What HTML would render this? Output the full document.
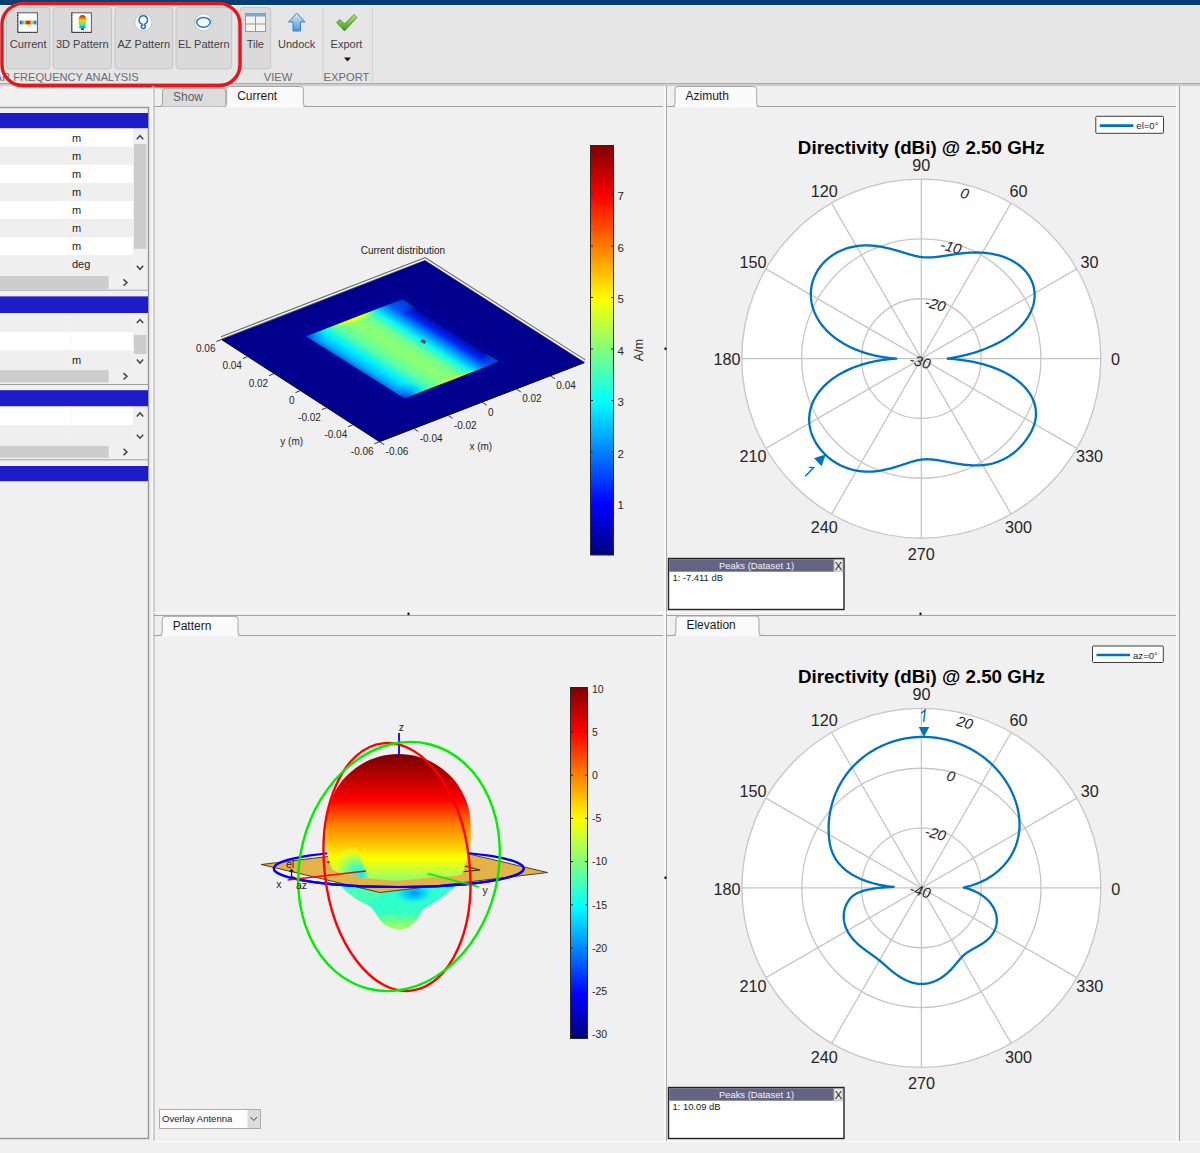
<!DOCTYPE html><html><head><meta charset="utf-8"><style>html,body{margin:0;padding:0;background:#f0f0f0;overflow:hidden}svg{display:block}text{font-family:"Liberation Sans", sans-serif}</style></head><body><svg width="1200" height="1153" viewBox="0 0 1200 1153"><defs><linearGradient id="jetv" x1="0" y1="1" x2="0" y2="0"><stop offset="0.0000" stop-color="#000080"/><stop offset="0.0312" stop-color="#00009f"/><stop offset="0.0625" stop-color="#0000bf"/><stop offset="0.0938" stop-color="#0000df"/><stop offset="0.1250" stop-color="#0000ff"/><stop offset="0.1562" stop-color="#0020ff"/><stop offset="0.1875" stop-color="#0040ff"/><stop offset="0.2188" stop-color="#0060ff"/><stop offset="0.2500" stop-color="#0080ff"/><stop offset="0.2812" stop-color="#009fff"/><stop offset="0.3125" stop-color="#00bfff"/><stop offset="0.3438" stop-color="#00dfff"/><stop offset="0.3750" stop-color="#00ffff"/><stop offset="0.4062" stop-color="#20ffdf"/><stop offset="0.4375" stop-color="#40ffbf"/><stop offset="0.4688" stop-color="#60ff9f"/><stop offset="0.5000" stop-color="#80ff80"/><stop offset="0.5312" stop-color="#9fff60"/><stop offset="0.5625" stop-color="#bfff40"/><stop offset="0.5938" stop-color="#dfff20"/><stop offset="0.6250" stop-color="#ffff00"/><stop offset="0.6562" stop-color="#ffdf00"/><stop offset="0.6875" stop-color="#ffbf00"/><stop offset="0.7188" stop-color="#ff9f00"/><stop offset="0.7500" stop-color="#ff8000"/><stop offset="0.7812" stop-color="#ff6000"/><stop offset="0.8125" stop-color="#ff4000"/><stop offset="0.8438" stop-color="#ff2000"/><stop offset="0.8750" stop-color="#ff0000"/><stop offset="0.9062" stop-color="#df0000"/><stop offset="0.9375" stop-color="#bf0000"/><stop offset="0.9688" stop-color="#9f0000"/><stop offset="1.0000" stop-color="#800000"/></linearGradient></defs><rect x="0" y="0" width="1200" height="1153" fill="#f0f0f0"/><rect x="0" y="0" width="1200" height="5" fill="#053e76"/><rect x="0" y="5" width="1200" height="1" fill="#fafafa"/><rect x="0" y="6" width="1200" height="77" fill="#e6e6e6"/><rect x="0" y="83" width="1200" height="1.6" fill="#acacac"/><rect x="0" y="84.6" width="1200" height="1.6" fill="#d0d0d0"/><rect x="6.5" y="7.5" width="43.3" height="61.3" rx="3" fill="#dadada" stroke="#c4c4c4" stroke-width="1"/><rect x="53.1" y="7.5" width="58.5" height="61.3" rx="3" fill="#dadada" stroke="#c4c4c4" stroke-width="1"/><rect x="115.0" y="7.5" width="57.7" height="61.3" rx="3" fill="#dadada" stroke="#c4c4c4" stroke-width="1"/><rect x="176.0" y="7.5" width="55.7" height="61.3" rx="3" fill="#dadada" stroke="#c4c4c4" stroke-width="1"/><rect x="240.0" y="7.5" width="30.7" height="61.3" rx="3" fill="#dadada" stroke="#c4c4c4" stroke-width="1"/><rect x="237.0" y="8" width="1" height="74" fill="#d2d2d2"/><rect x="322.5" y="8" width="1" height="74" fill="#d2d2d2"/><rect x="372.0" y="8" width="1" height="74" fill="#d2d2d2"/><text x="28.2" y="47.7" font-size="11.00" text-anchor="middle" fill="#404048" >Current</text><text x="82.3" y="47.7" font-size="11.00" text-anchor="middle" fill="#404048" >3D Pattern</text><text x="143.8" y="47.7" font-size="11.00" text-anchor="middle" fill="#404048" >AZ Pattern</text><text x="203.8" y="47.7" font-size="11.00" text-anchor="middle" fill="#404048" >EL Pattern</text><text x="255.3" y="47.7" font-size="11.00" text-anchor="middle" fill="#404048" >Tile</text><text x="296.7" y="47.7" font-size="11.00" text-anchor="middle" fill="#404048" >Undock</text><text x="346.5" y="47.7" font-size="11.00" text-anchor="middle" fill="#404048" >Export</text><text x="-5.2" y="81.1" font-size="11.10" text-anchor="start" fill="#6a6a72" >AR FREQUENCY ANALYSIS</text><text x="278.0" y="81.3" font-size="11.20" text-anchor="middle" fill="#6a6a72" >VIEW</text><text x="346.5" y="81.3" font-size="11.20" text-anchor="middle" fill="#6a6a72" >EXPORT</text><path d="M344 57.5 L351 57.5 L347.5 61.5 Z" fill="#111"/><rect x="17.8" y="12.8" width="19.6" height="19.6" fill="#fff" stroke="#5a5a5a" stroke-width="1"/><path d="M17.8 12.8 V32.4 H37.4" fill="none" stroke="#222" stroke-width="1.1" stroke-dasharray="1 1.2"/><defs><linearGradient id="curg" x1="0" x2="1"><stop offset="0" stop-color="#0040ff"/><stop offset=".14" stop-color="#00c0ff"/><stop offset=".3" stop-color="#ffd000"/><stop offset=".45" stop-color="#ff0000"/><stop offset=".58" stop-color="#ff2000"/><stop offset=".72" stop-color="#ffe000"/><stop offset=".86" stop-color="#00d0ff"/><stop offset="1" stop-color="#0040ff"/></linearGradient></defs><rect x="19.8" y="20.6" width="16.5" height="3.8" fill="url(#curg)"/><rect x="71.8" y="12.8" width="19.6" height="19.6" fill="#fff" stroke="#5a5a5a" stroke-width="1"/><path d="M71.8 12.8 V32.4 H91.4" fill="none" stroke="#222" stroke-width="1.1" stroke-dasharray="1 1.2"/><defs><linearGradient id="p3g" x1="0" y1="0" x2="0" y2="1"><stop offset="0" stop-color="#e00000"/><stop offset=".35" stop-color="#ffd000"/><stop offset=".6" stop-color="#40ff80"/><stop offset=".85" stop-color="#00a0ff"/><stop offset="1" stop-color="#0030ff"/></linearGradient></defs><path d="M82.5 15 C79.5 15 78.5 18 78.5 21 C78.5 24 79.5 26 80 26.5 L78.5 27 L79.5 28 L81 28 L81 30 L84 30 L84 28 L85.5 28 L86.5 27 L85 26.5 C85.5 26 86.5 24 86.5 21 C86.5 18 85.5 15 82.5 15 Z" fill="url(#p3g)"/><circle cx="143.3" cy="22.4" r="8.6" fill="#fbfbfb" stroke="#bdbdbd" stroke-width=".9"/><path d="M142.2 24.3 C139.6 23.3 138.9 21.3 139.1 19.6 C139.4 17.3 141.2 15.8 143.3 15.8 C145.4 15.8 147.2 17.3 147.5 19.6 C147.7 21.3 147 23.3 144.4 24.3 L144.4 25.2 C145.4 25.6 145.6 26.4 145.4 27.2 C145.1 28.3 144.2 28.7 143.3 28.7 C142.4 28.7 141.5 28.3 141.2 27.2 C141 26.4 141.2 25.6 142.2 25.2 Z" fill="none" stroke="#1e74c4" stroke-width="1.5"/><circle cx="203.3" cy="22.3" r="8.6" fill="#fbfbfb" stroke="#bdbdbd" stroke-width=".9"/><ellipse cx="203.5" cy="22.3" rx="6.8" ry="4.9" fill="none" stroke="#1e74c4" stroke-width="1.5"/><rect x="245.5" y="13.5" width="20" height="18" fill="#f4f4f4" stroke="#9a9a9a" stroke-width="1"/><rect x="245.5" y="13.5" width="20" height="3" fill="#7ea6d0"/><path d="M255.5 16.5 V31.5 M245.5 24 H265.5" stroke="#9a9a9a" stroke-width="1"/><defs><linearGradient id="upg" x1="0" y1="0" x2="0" y2="1"><stop offset="0" stop-color="#d8ecfb"/><stop offset="1" stop-color="#4f95d6"/></linearGradient></defs><path d="M296.7 13 L305 22 L300.5 22 L300.5 31 L293 31 L293 22 L288.5 22 Z" fill="url(#upg)" stroke="#3f7fbf" stroke-width="1"/><defs><linearGradient id="ckg" x1="0" y1="0" x2="0" y2="1"><stop offset="0" stop-color="#b8e070"/><stop offset="1" stop-color="#3a9a20"/></linearGradient></defs><path d="M336.5 22.5 L340 19.5 L344.5 24 L354 14.5 L357 17.5 L344.5 31 Z" fill="url(#ckg)" stroke="#3c8a2a" stroke-width=".8"/><rect x="2" y="3.5" width="238" height="82.2" rx="21" fill="none" stroke="#e3161e" stroke-width="3.4"/><rect x="-1" y="107.5" width="149.5" height="1031" fill="#f0f0f0" stroke="#969696" stroke-width="1.4"/><rect x="0" y="113.0" width="148" height="15.3" fill="#1c1cc8"/><rect x="0" y="128.6" width="133" height="18.1" fill="#ffffff"/><text x="72" y="141.7" font-size="11" fill="#222">m</text><rect x="0" y="146.7" width="133" height="18.1" fill="#efefef"/><text x="72" y="159.8" font-size="11" fill="#222">m</text><rect x="0" y="164.8" width="133" height="18.1" fill="#ffffff"/><text x="72" y="177.9" font-size="11" fill="#222">m</text><rect x="0" y="182.9" width="133" height="18.1" fill="#efefef"/><text x="72" y="196.0" font-size="11" fill="#222">m</text><rect x="0" y="201.0" width="133" height="18.1" fill="#ffffff"/><text x="72" y="214.1" font-size="11" fill="#222">m</text><rect x="0" y="219.1" width="133" height="18.1" fill="#efefef"/><text x="72" y="232.2" font-size="11" fill="#222">m</text><rect x="0" y="237.2" width="133" height="18.1" fill="#ffffff"/><text x="72" y="250.2" font-size="11" fill="#222">m</text><rect x="0" y="255.3" width="133" height="18.1" fill="#efefef"/><text x="72" y="268.4" font-size="11" fill="#222">deg</text><rect x="70.5" y="128.6" width="1" height="144.8" fill="#f2f2f2" opacity=".6"/><rect x="133" y="128.6" width="14" height="144.8" fill="#f0f0f0"/><rect x="134" y="143.9" width="12.5" height="104.9" fill="#cdcdcd"/><path d="M136.8 139.2 L140 135.7 L143.2 139.2" fill="none" stroke="#444" stroke-width="1.5"/><path d="M136.8 265.8 L140 269.3 L143.2 265.8" fill="none" stroke="#444" stroke-width="1.5"/><rect x="0" y="275.5" width="147" height="14.3" fill="#f0f0f0"/><rect x="0" y="276.0" width="108.7" height="13.3" fill="#cdcdcd"/><path d="M123.5 279.4 L127 282.6 L123.5 285.8" fill="none" stroke="#444" stroke-width="1.5"/><rect x="0" y="289.8" width="148" height="1" fill="#a0a0a0"/><rect x="0" y="290.8" width="148" height="6" fill="#f0f0f0"/><rect x="0" y="296.4" width="148" height="16.6" fill="#1c1cc8"/><rect x="0" y="314.0" width="133" height="18.2" fill="#efefef"/><rect x="0" y="332.2" width="133" height="18.2" fill="#ffffff"/><rect x="0" y="350.4" width="133" height="18.2" fill="#efefef"/><text x="72" y="363.5" font-size="11" fill="#222">m</text><rect x="70.5" y="314.0" width="1" height="54.6" fill="#f2f2f2" opacity=".6"/><rect x="133" y="314.0" width="14" height="54.6" fill="#f0f0f0"/><rect x="134" y="335.0" width="12.5" height="19.0" fill="#cdcdcd"/><path d="M136.8 323.0 L140 319.5 L143.2 323.0" fill="none" stroke="#444" stroke-width="1.5"/><path d="M136.8 359.6 L140 363.1 L143.2 359.6" fill="none" stroke="#444" stroke-width="1.5"/><rect x="0" y="369.6" width="147" height="13.4" fill="#f0f0f0"/><rect x="0" y="370.1" width="108.7" height="12.4" fill="#cdcdcd"/><path d="M123.5 373.1 L127 376.3 L123.5 379.5" fill="none" stroke="#444" stroke-width="1.5"/><rect x="0" y="384.0" width="148" height="1" fill="#a0a0a0"/><rect x="0" y="390.2" width="148" height="16.3" fill="#1c1cc8"/><rect x="0" y="406.5" width="133" height="18.5" fill="#ffffff"/><rect x="0" y="425.0" width="133" height="18.5" fill="#efefef"/><rect x="70.5" y="406.5" width="1" height="37.0" fill="#f2f2f2" opacity=".6"/><rect x="133" y="406.5" width="14" height="37.0" fill="#f0f0f0"/><path d="M136.8 416.4 L140 412.9 L143.2 416.4" fill="none" stroke="#444" stroke-width="1.5"/><path d="M136.8 434.7 L140 438.2 L143.2 434.7" fill="none" stroke="#444" stroke-width="1.5"/><rect x="0" y="445.5" width="147" height="12.8" fill="#f0f0f0"/><rect x="0" y="446.0" width="108.7" height="11.8" fill="#cdcdcd"/><path d="M123.5 448.7 L127 451.9 L123.5 455.1" fill="none" stroke="#444" stroke-width="1.5"/><rect x="0" y="459.3" width="148" height="1" fill="#a0a0a0"/><rect x="0" y="466" width="148" height="15.2" fill="#1c1cc8"/><rect x="152.5" y="86" width="1" height="1055" fill="#ffffff"/><rect x="153.5" y="86" width="1" height="1055" fill="#a8a8a8"/><rect x="664.5" y="86" width="1" height="1055" fill="#ffffff"/><rect x="666" y="86" width="1" height="1055" fill="#a8a8a8"/><rect x="1176" y="86" width="1" height="1055" fill="#fbfbfb"/><rect x="1179" y="86" width="1" height="1055" fill="#a4a4a4"/><rect x="153" y="1141" width="1047" height="1" fill="#fdfdfd"/><rect x="153" y="612" width="1024" height="1" fill="#fdfdfd"/><rect x="154.0" y="106.0" width="509.0" height="1" fill="#a0a0a0"/><path d="M159.5 106.5 Q162.5 106.5 162.5 103.0 L162.5 91.3 Q162.5 88.3 165.5 88.3 L222.8 88.3 Q225.8 88.3 225.8 91.3 L225.8 103.0 Q225.8 106.5 228.8 106.5" fill="#dcdcdc" stroke="#a4a4a4" stroke-width="1"/><text x="173.0" y="100.8" font-size="12" fill="#606060">Show</text><path d="M223.7 106.5 Q226.7 106.5 226.7 103.0 L226.7 89.5 Q226.7 86.5 229.7 86.5 L300.3 86.5 Q303.3 86.5 303.3 89.5 L303.3 103.0 Q303.3 106.5 306.3 106.5" fill="#fafafa" stroke="#a4a4a4" stroke-width="1"/><rect x="227.2" y="105.5" width="75.6" height="2" fill="#fafafa"/><text x="237.2" y="99.8" font-size="12" fill="#1a1a1a">Current</text><rect x="667.0" y="106.0" width="509.0" height="1" fill="#a0a0a0"/><path d="M672.0 106.5 Q675.0 106.5 675.0 103.0 L675.0 89.5 Q675.0 86.5 678.0 86.5 L753.7 86.5 Q756.7 86.5 756.7 89.5 L756.7 103.0 Q756.7 106.5 759.7 106.5" fill="#fafafa" stroke="#a4a4a4" stroke-width="1"/><rect x="675.5" y="105.5" width="80.7" height="2" fill="#fafafa"/><text x="685.5" y="99.8" font-size="12" fill="#1a1a1a">Azimuth</text><rect x="154.0" y="615.0" width="509.0" height="1" fill="#a0a0a0"/><rect x="154.0" y="635.0" width="509.0" height="1" fill="#a0a0a0"/><path d="M159.2 635.5 Q162.2 635.5 162.2 632.0 L162.2 619.3 Q162.2 616.3 165.2 616.3 L235.0 616.3 Q238.0 616.3 238.0 619.3 L238.0 632.0 Q238.0 635.5 241.0 635.5" fill="#fafafa" stroke="#a4a4a4" stroke-width="1"/><rect x="162.7" y="634.5" width="74.8" height="2" fill="#fafafa"/><text x="172.7" y="629.6" font-size="12" fill="#1a1a1a">Pattern</text><rect x="667.0" y="615.0" width="509.0" height="1" fill="#a0a0a0"/><rect x="667.0" y="635.0" width="509.0" height="1" fill="#a0a0a0"/><path d="M672.9 635.5 Q675.9 635.5 675.9 632.0 L675.9 619.0 Q675.9 616.0 678.9 616.0 L756.0 616.0 Q759.0 616.0 759.0 619.0 L759.0 632.0 Q759.0 635.5 762.0 635.5" fill="#fafafa" stroke="#a4a4a4" stroke-width="1"/><rect x="676.4" y="634.5" width="82.1" height="2" fill="#fafafa"/><text x="686.4" y="629.3" font-size="12" fill="#1a1a1a">Elevation</text><circle cx="921.30" cy="358.60" r="179.50" fill="#ffffff" stroke="#c6c6c6" stroke-width="1.3"/><circle cx="921.30" cy="358.60" r="59.83" fill="none" stroke="#c6c6c6" stroke-width="1.3"/><circle cx="921.30" cy="358.60" r="119.67" fill="none" stroke="#c6c6c6" stroke-width="1.3"/><line x1="741.80" y1="358.60" x2="1100.80" y2="358.60" stroke="#c6c6c6" stroke-width="1.3"/><line x1="765.85" y1="448.35" x2="1076.75" y2="268.85" stroke="#c6c6c6" stroke-width="1.3"/><line x1="831.55" y1="514.05" x2="1011.05" y2="203.15" stroke="#c6c6c6" stroke-width="1.3"/><line x1="921.30" y1="538.10" x2="921.30" y2="179.10" stroke="#c6c6c6" stroke-width="1.3"/><line x1="1011.05" y1="514.05" x2="831.55" y2="203.15" stroke="#c6c6c6" stroke-width="1.3"/><line x1="1076.75" y1="448.35" x2="765.85" y2="268.85" stroke="#c6c6c6" stroke-width="1.3"/><text x="1115.60" y="365.20" font-size="16.2" text-anchor="middle" fill="#262626">0</text><text x="1089.57" y="268.05" font-size="16.2" text-anchor="middle" fill="#262626">30</text><text x="1018.45" y="196.93" font-size="16.2" text-anchor="middle" fill="#262626">60</text><text x="921.30" y="170.90" font-size="16.2" text-anchor="middle" fill="#262626">90</text><text x="824.15" y="196.93" font-size="16.2" text-anchor="middle" fill="#262626">120</text><text x="753.03" y="268.05" font-size="16.2" text-anchor="middle" fill="#262626">150</text><text x="727.00" y="365.20" font-size="16.2" text-anchor="middle" fill="#262626">180</text><text x="753.03" y="462.35" font-size="16.2" text-anchor="middle" fill="#262626">210</text><text x="824.15" y="533.47" font-size="16.2" text-anchor="middle" fill="#262626">240</text><text x="921.30" y="559.50" font-size="16.2" text-anchor="middle" fill="#262626">270</text><text x="1018.45" y="533.47" font-size="16.2" text-anchor="middle" fill="#262626">300</text><text x="1089.57" y="462.35" font-size="16.2" text-anchor="middle" fill="#262626">330</text><text x="964.70" y="198.40" font-size="14.5" font-style="italic" text-anchor="middle" fill="#262626" transform="rotate(15 964.70 193.40)">0</text><text x="950.90" y="251.90" font-size="14.5" font-style="italic" text-anchor="middle" fill="#262626" transform="rotate(15 950.90 246.90)">-10</text><text x="935.30" y="309.30" font-size="14.5" font-style="italic" text-anchor="middle" fill="#262626" transform="rotate(15 935.30 304.30)">-20</text><text x="920.10" y="366.70" font-size="14.5" font-style="italic" text-anchor="middle" fill="#262626" transform="rotate(15 920.10 361.70)">-30</text><polyline points="946.80,358.60 948.56,358.36 950.40,358.09 952.32,357.79 954.31,357.45 956.37,357.07 958.49,356.65 960.66,356.19 962.89,355.69 965.15,355.15 967.45,354.56 969.78,353.93 972.13,353.26 974.50,352.54 976.88,351.78 979.27,350.97 981.66,350.12 984.04,349.22 986.41,348.29 988.76,347.31 991.08,346.30 993.38,345.24 995.64,344.15 997.86,343.02 1000.02,341.87 1002.14,340.68 1004.20,339.46 1006.19,338.22 1008.11,336.95 1009.96,335.67 1011.73,334.37 1013.43,333.05 1015.05,331.72 1016.60,330.37 1018.08,329.01 1019.49,327.64 1020.82,326.26 1022.09,324.88 1023.29,323.48 1024.43,322.08 1025.49,320.68 1026.50,319.27 1027.44,317.86 1028.31,316.45 1029.13,315.03 1029.89,313.62 1030.58,312.21 1031.22,310.81 1031.80,309.40 1032.32,308.00 1032.79,306.61 1033.20,305.23 1033.56,303.85 1033.86,302.48 1034.11,301.12 1034.31,299.77 1034.46,298.43 1034.56,297.10 1034.62,295.79 1034.62,294.49 1034.58,293.20 1034.49,291.93 1034.36,290.67 1034.18,289.43 1033.96,288.20 1033.70,286.99 1033.40,285.80 1033.06,284.63 1032.68,283.47 1032.26,282.34 1031.81,281.22 1031.32,280.13 1030.79,279.05 1030.23,277.99 1029.64,276.96 1029.02,275.95 1028.36,274.95 1027.68,273.98 1026.97,273.03 1026.23,272.10 1025.46,271.20 1024.67,270.31 1023.85,269.45 1023.01,268.61 1022.15,267.80 1021.26,267.01 1020.35,266.23 1019.42,265.48 1018.48,264.76 1017.51,264.05 1016.53,263.37 1015.53,262.71 1014.51,262.08 1013.48,261.46 1012.44,260.87 1011.38,260.30 1010.31,259.75 1009.22,259.22 1008.13,258.71 1007.02,258.23 1005.91,257.77 1004.78,257.33 1003.65,256.91 1002.51,256.51 1001.36,256.13 1000.20,255.77 999.04,255.43 997.87,255.12 996.70,254.82 995.52,254.54 994.34,254.28 993.16,254.04 991.97,253.82 990.78,253.62 989.59,253.44 988.40,253.27 987.21,253.12 986.02,252.99 984.83,252.88 983.63,252.78 982.44,252.69 981.26,252.63 980.07,252.57 978.89,252.54 977.71,252.51 976.53,252.50 975.36,252.50 974.19,252.52 973.03,252.55 971.87,252.58 970.71,252.63 969.56,252.70 968.42,252.77 967.28,252.85 966.15,252.94 965.03,253.04 963.91,253.14 962.80,253.26 961.69,253.38 960.59,253.50 959.50,253.64 958.42,253.77 957.35,253.92 956.28,254.06 955.22,254.21 954.16,254.37 953.12,254.52 952.08,254.68 951.05,254.84 950.03,255.00 949.02,255.16 948.01,255.31 947.01,255.47 946.02,255.63 945.04,255.78 944.06,255.93 943.09,256.08 942.13,256.22 941.17,256.36 940.23,256.49 939.28,256.61 938.35,256.73 937.42,256.85 936.49,256.95 935.57,257.05 934.66,257.13 933.75,257.21 932.84,257.28 931.94,257.34 931.05,257.39 930.15,257.42 929.26,257.45 928.37,257.46 927.49,257.45 926.60,257.44 925.72,257.41 924.84,257.36 923.95,257.30 923.07,257.23 922.19,257.14 921.30,257.03 920.41,256.91 919.52,256.77 918.63,256.61 917.73,256.44 916.83,256.25 915.93,256.06 915.02,255.85 914.10,255.62 913.18,255.39 912.25,255.14 911.31,254.89 910.37,254.62 909.42,254.35 908.47,254.07 907.50,253.79 906.53,253.49 905.55,253.20 904.56,252.89 903.56,252.59 902.55,252.28 901.54,251.97 900.51,251.66 899.48,251.34 898.44,251.03 897.38,250.72 896.32,250.41 895.25,250.10 894.17,249.80 893.09,249.50 891.99,249.21 890.88,248.92 889.77,248.63 888.65,248.36 887.51,248.09 886.37,247.83 885.23,247.58 884.07,247.34 882.91,247.11 881.74,246.90 880.57,246.69 879.39,246.50 878.20,246.32 877.01,246.16 875.81,246.01 874.61,245.87 873.40,245.75 872.19,245.65 870.98,245.57 869.76,245.51 868.54,245.46 867.32,245.43 866.10,245.42 864.88,245.44 863.66,245.47 862.44,245.53 861.22,245.61 860.00,245.71 858.79,245.83 857.58,245.97 856.37,246.14 855.17,246.33 853.97,246.55 852.78,246.79 851.59,247.05 850.41,247.33 849.24,247.64 848.08,247.97 846.92,248.32 845.77,248.70 844.63,249.10 843.50,249.52 842.38,249.97 841.26,250.44 840.16,250.93 839.08,251.44 838.00,251.98 836.94,252.54 835.89,253.12 834.85,253.73 833.83,254.36 832.82,255.00 831.83,255.68 830.85,256.37 829.89,257.08 828.95,257.82 828.03,258.58 827.12,259.35 826.23,260.15 825.36,260.97 824.51,261.81 823.68,262.67 822.87,263.55 822.08,264.45 821.32,265.37 820.57,266.30 819.85,267.26 819.16,268.23 818.48,269.22 817.83,270.23 817.21,271.26 816.61,272.30 816.04,273.36 815.49,274.44 814.97,275.53 814.48,276.63 814.02,277.76 813.58,278.89 813.17,280.04 812.80,281.21 812.45,282.39 812.14,283.58 811.86,284.78 811.61,286.00 811.39,287.23 811.21,288.46 811.06,289.72 810.95,290.98 810.87,292.25 810.83,293.53 810.83,294.82 810.86,296.12 810.93,297.42 811.05,298.74 811.20,300.06 811.39,301.38 811.62,302.71 811.89,304.05 812.20,305.39 812.56,306.73 812.96,308.08 813.40,309.43 813.89,310.78 814.42,312.13 814.99,313.48 815.62,314.82 816.28,316.17 817.00,317.51 817.76,318.85 818.56,320.19 819.42,321.52 820.32,322.84 821.28,324.16 822.28,325.47 823.33,326.77 824.43,328.06 825.58,329.34 826.78,330.60 828.04,331.86 829.34,333.10 830.70,334.32 832.11,335.53 833.57,336.73 835.08,337.90 836.64,339.06 838.26,340.19 839.93,341.31 841.66,342.40 843.44,343.47 845.27,344.51 847.16,345.53 849.10,346.52 851.09,347.48 853.14,348.41 855.25,349.32 857.41,350.19 859.62,351.03 861.89,351.83 864.21,352.60 866.58,353.33 869.02,354.03 871.50,354.68 874.04,355.30 876.64,355.87 879.28,356.40 881.99,356.88 884.74,357.32 887.55,357.72 890.42,358.06 893.33,358.36 896.30,358.60 892.97,358.85 889.71,359.15 886.51,359.51 883.39,359.92 880.34,360.39 877.36,360.90 874.45,361.47 871.60,362.08 868.83,362.73 866.13,363.43 863.50,364.17 860.93,364.95 858.44,365.76 856.01,366.62 853.65,367.51 851.36,368.43 849.14,369.39 846.98,370.37 844.89,371.39 842.87,372.43 840.91,373.50 839.02,374.59 837.19,375.71 835.43,376.85 833.73,378.01 832.10,379.19 830.53,380.39 829.02,381.61 827.57,382.84 826.19,384.09 824.86,385.35 823.59,386.62 822.39,387.90 821.24,389.19 820.15,390.49 819.11,391.80 818.13,393.12 817.21,394.44 816.35,395.77 815.53,397.10 814.77,398.43 814.06,399.76 813.41,401.10 812.80,402.44 812.25,403.77 811.74,405.10 811.28,406.44 810.87,407.76 810.51,409.09 810.19,410.41 809.92,411.72 809.69,413.03 809.51,414.34 809.37,415.63 809.27,416.92 809.20,418.20 809.18,419.47 809.20,420.74 809.26,421.99 809.35,423.23 809.48,424.47 809.65,425.69 809.85,426.90 810.08,428.10 810.34,429.29 810.64,430.46 810.97,431.63 811.33,432.78 811.72,433.92 812.13,435.04 812.57,436.15 813.04,437.25 813.54,438.34 814.06,439.41 814.60,440.47 815.17,441.52 815.76,442.55 816.37,443.57 817.01,444.57 817.66,445.56 818.33,446.54 819.03,447.50 819.74,448.45 820.48,449.38 821.23,450.30 822.00,451.20 822.79,452.08 823.60,452.95 824.43,453.80 825.27,454.63 826.13,455.45 827.01,456.24 827.90,457.02 828.81,457.79 829.73,458.53 830.67,459.25 831.62,459.96 832.59,460.65 833.57,461.32 834.57,461.96 835.58,462.59 836.60,463.20 837.63,463.79 838.67,464.36 839.73,464.91 840.79,465.44 841.87,465.94 842.96,466.43 844.05,466.89 845.16,467.34 846.27,467.76 847.40,468.16 848.53,468.55 849.67,468.90 850.81,469.24 851.97,469.56 853.12,469.85 854.29,470.12 855.46,470.38 856.63,470.60 857.81,470.81 859.00,471.00 860.19,471.16 861.38,471.30 862.57,471.42 863.77,471.51 864.97,471.59 866.17,471.64 867.37,471.67 868.57,471.68 869.77,471.67 870.98,471.63 872.18,471.57 873.38,471.49 874.58,471.40 875.77,471.28 876.97,471.14 878.16,470.99 879.34,470.82 880.52,470.63 881.70,470.43 882.87,470.21 884.03,469.98 885.19,469.73 886.34,469.48 887.48,469.21 888.62,468.93 889.75,468.64 890.87,468.34 891.98,468.04 893.08,467.72 894.17,467.40 895.26,467.08 896.33,466.75 897.40,466.42 898.45,466.08 899.50,465.75 900.54,465.41 901.57,465.07 902.59,464.74 903.59,464.40 904.59,464.07 905.59,463.74 906.57,463.42 907.54,463.10 908.51,462.79 909.46,462.49 910.41,462.19 911.35,461.91 912.29,461.63 913.21,461.37 914.13,461.12 915.04,460.88 915.95,460.65 916.85,460.44 917.75,460.24 918.64,460.06 919.53,459.90 920.42,459.76 921.30,459.63 922.18,459.52 923.06,459.44 923.94,459.37 924.82,459.32 925.70,459.28 926.58,459.27 927.46,459.26 928.34,459.28 929.23,459.31 930.11,459.35 931.01,459.41 931.90,459.48 932.80,459.56 933.71,459.66 934.62,459.77 935.53,459.88 936.46,460.01 937.38,460.15 938.32,460.29 939.26,460.44 940.20,460.60 941.16,460.77 942.12,460.94 943.09,461.12 944.07,461.30 945.05,461.48 946.04,461.67 947.05,461.86 948.05,462.05 949.07,462.24 950.10,462.44 951.13,462.63 952.17,462.82 953.22,463.01 954.28,463.20 955.35,463.38 956.42,463.56 957.50,463.74 958.59,463.91 959.69,464.07 960.79,464.23 961.91,464.38 963.02,464.52 964.15,464.66 965.28,464.78 966.42,464.90 967.57,465.00 968.72,465.10 969.87,465.18 971.03,465.25 972.20,465.31 973.37,465.35 974.54,465.38 975.72,465.40 976.89,465.40 978.07,465.38 979.26,465.34 980.44,465.29 981.62,465.21 982.80,465.12 983.98,465.00 985.15,464.87 986.32,464.71 987.49,464.53 988.65,464.32 989.81,464.09 990.96,463.84 992.10,463.57 993.23,463.27 994.36,462.94 995.48,462.59 996.59,462.22 997.69,461.83 998.78,461.42 999.86,460.98 1000.93,460.52 1001.99,460.04 1003.04,459.54 1004.08,459.02 1005.11,458.48 1006.13,457.92 1007.13,457.34 1008.13,456.74 1009.11,456.12 1010.07,455.48 1011.03,454.82 1011.97,454.15 1012.90,453.46 1013.82,452.75 1014.72,452.02 1015.61,451.28 1016.49,450.52 1017.35,449.74 1018.19,448.95 1019.02,448.15 1019.84,447.33 1020.64,446.49 1021.43,445.64 1022.20,444.78 1022.96,443.90 1023.70,443.01 1024.43,442.11 1025.14,441.20 1025.83,440.27 1026.51,439.33 1027.17,438.38 1027.82,437.42 1028.45,436.45 1029.06,435.47 1029.66,434.47 1030.24,433.47 1030.80,432.46 1031.33,431.43 1031.85,430.39 1032.34,429.34 1032.80,428.27 1033.24,427.20 1033.65,426.11 1034.03,425.01 1034.39,423.89 1034.71,422.76 1034.99,421.62 1035.24,420.47 1035.46,419.30 1035.64,418.12 1035.78,416.93 1035.87,415.72 1035.93,414.51 1035.94,413.28 1035.91,412.04 1035.83,410.80 1035.71,409.54 1035.53,408.27 1035.31,406.99 1035.03,405.71 1034.70,404.42 1034.31,403.12 1033.87,401.81 1033.36,400.50 1032.80,399.18 1032.18,397.87 1031.50,396.54 1030.75,395.22 1029.94,393.90 1029.06,392.58 1028.11,391.26 1027.09,389.94 1026.01,388.62 1024.85,387.32 1023.61,386.02 1022.31,384.72 1020.92,383.44 1019.46,382.17 1017.92,380.91 1016.30,379.66 1014.60,378.43 1012.82,377.22 1010.96,376.03 1009.01,374.86 1006.97,373.71 1004.85,372.58 1002.64,371.48 1000.34,370.41 997.95,369.37 995.47,368.36 992.90,367.39 990.23,366.45 987.47,365.56 984.62,364.70 981.67,363.88 978.63,363.11 975.49,362.39 972.25,361.72 968.91,361.10 965.48,360.53 961.94,360.02 958.31,359.57 954.57,359.18 950.74,358.86 946.80,358.60" fill="none" stroke="#0072bd" stroke-width="2.3" stroke-linejoin="round"/><path d="M814.0 458.3 L825.6 454.6 L821.7 466.3 Z" fill="#0072bd"/><path d="M805.2 476.2 L813.6 467.6 L809.2 467.4" fill="none" stroke="#0072bd" stroke-width="1.4"/><text x="921.30" y="153.50" font-size="18.8" font-weight="bold" text-anchor="middle" fill="#000">Directivity (dBi) @ 2.50 GHz</text><rect x="1095.8" y="116.3" width="67.7" height="17.0" fill="#fff" stroke="#3c3c3c" stroke-width="1" rx="1"/><line x1="1099.8" y1="125.6" x2="1133.3" y2="125.6" stroke="#0072bd" stroke-width="2.6"/><text x="1136.3" y="129.1" font-size="9.6" fill="#262626">el=0&#176;</text><rect x="668.5" y="558.5" width="175.5" height="51" fill="#fff" stroke="#222" stroke-width="1.4"/><rect x="669.2" y="559.2" width="164.5" height="12.5" fill="#636384"/><text x="756.5" y="568.5" font-size="9.4" text-anchor="middle" fill="#f4f4f4">Peaks (Dataset 1)</text><rect x="834" y="559.7" width="9" height="11.5" fill="#e8e8e8" stroke="#888" stroke-width=".6"/><text x="838.5" y="569.5" font-size="11" text-anchor="middle" fill="#222" font-family="Liberation Serif">X</text><text x="672.5" y="581.0" font-size="9.4" fill="#1a1a1a">1: -7.411 dB</text><circle cx="921.40" cy="887.90" r="179.50" fill="#ffffff" stroke="#c6c6c6" stroke-width="1.3"/><circle cx="921.40" cy="887.90" r="59.83" fill="none" stroke="#c6c6c6" stroke-width="1.3"/><circle cx="921.40" cy="887.90" r="119.67" fill="none" stroke="#c6c6c6" stroke-width="1.3"/><line x1="741.90" y1="887.90" x2="1100.90" y2="887.90" stroke="#c6c6c6" stroke-width="1.3"/><line x1="765.95" y1="977.65" x2="1076.85" y2="798.15" stroke="#c6c6c6" stroke-width="1.3"/><line x1="831.65" y1="1043.35" x2="1011.15" y2="732.45" stroke="#c6c6c6" stroke-width="1.3"/><line x1="921.40" y1="1067.40" x2="921.40" y2="708.40" stroke="#c6c6c6" stroke-width="1.3"/><line x1="1011.15" y1="1043.35" x2="831.65" y2="732.45" stroke="#c6c6c6" stroke-width="1.3"/><line x1="1076.85" y1="977.65" x2="765.95" y2="798.15" stroke="#c6c6c6" stroke-width="1.3"/><text x="1115.70" y="894.50" font-size="16.2" text-anchor="middle" fill="#262626">0</text><text x="1089.67" y="797.35" font-size="16.2" text-anchor="middle" fill="#262626">30</text><text x="1018.55" y="726.23" font-size="16.2" text-anchor="middle" fill="#262626">60</text><text x="921.40" y="700.20" font-size="16.2" text-anchor="middle" fill="#262626">90</text><text x="824.25" y="726.23" font-size="16.2" text-anchor="middle" fill="#262626">120</text><text x="753.13" y="797.35" font-size="16.2" text-anchor="middle" fill="#262626">150</text><text x="727.10" y="894.50" font-size="16.2" text-anchor="middle" fill="#262626">180</text><text x="753.13" y="991.65" font-size="16.2" text-anchor="middle" fill="#262626">210</text><text x="824.25" y="1062.77" font-size="16.2" text-anchor="middle" fill="#262626">240</text><text x="921.40" y="1088.80" font-size="16.2" text-anchor="middle" fill="#262626">270</text><text x="1018.55" y="1062.77" font-size="16.2" text-anchor="middle" fill="#262626">300</text><text x="1089.67" y="991.65" font-size="16.2" text-anchor="middle" fill="#262626">330</text><text x="964.80" y="727.70" font-size="14.5" font-style="italic" text-anchor="middle" fill="#262626" transform="rotate(15 964.80 722.70)">20</text><text x="951.00" y="781.20" font-size="14.5" font-style="italic" text-anchor="middle" fill="#262626" transform="rotate(15 951.00 776.20)">0</text><text x="935.40" y="838.60" font-size="14.5" font-style="italic" text-anchor="middle" fill="#262626" transform="rotate(15 935.40 833.60)">-20</text><text x="920.20" y="896.00" font-size="14.5" font-style="italic" text-anchor="middle" fill="#262626" transform="rotate(15 920.20 891.00)">-40</text><polyline points="965.24,887.90 963.80,887.53 965.57,887.13 967.31,886.70 969.02,886.24 970.70,885.75 972.36,885.23 973.99,884.68 975.59,884.11 977.15,883.51 978.70,882.89 980.21,882.24 981.69,881.56 983.14,880.87 984.57,880.14 985.96,879.40 987.33,878.63 988.67,877.85 989.97,877.04 991.25,876.21 992.50,875.36 993.72,874.50 994.91,873.61 996.07,872.71 997.20,871.79 998.30,870.85 999.37,869.90 1000.42,868.93 1001.43,867.95 1002.41,866.95 1003.37,865.94 1004.30,864.91 1005.19,863.87 1006.06,862.82 1006.90,861.76 1007.71,860.69 1008.50,859.60 1009.25,858.51 1009.98,857.40 1010.67,856.29 1011.34,855.16 1011.99,854.03 1012.60,852.89 1013.19,851.74 1013.75,850.59 1014.28,849.43 1014.79,848.26 1015.27,847.09 1015.72,845.91 1016.14,844.72 1016.54,843.53 1016.92,842.34 1017.26,841.14 1017.58,839.94 1017.88,838.74 1018.15,837.53 1018.40,836.33 1018.62,835.12 1018.81,833.90 1018.99,832.69 1019.13,831.47 1019.26,830.26 1019.36,829.04 1019.43,827.82 1019.49,826.61 1019.52,825.39 1019.53,824.18 1019.51,822.96 1019.47,821.75 1019.41,820.54 1019.33,819.33 1019.23,818.12 1019.11,816.91 1018.96,815.71 1018.80,814.51 1018.61,813.31 1018.40,812.11 1018.18,810.92 1017.93,809.73 1017.66,808.55 1017.38,807.36 1017.07,806.19 1016.75,805.01 1016.41,803.84 1016.05,802.68 1015.67,801.52 1015.28,800.36 1014.86,799.21 1014.43,798.06 1013.98,796.92 1013.52,795.78 1013.04,794.65 1012.54,793.52 1012.03,792.40 1011.50,791.28 1010.95,790.17 1010.39,789.07 1009.81,787.97 1009.22,786.88 1008.61,785.79 1007.99,784.71 1007.35,783.64 1006.69,782.58 1006.02,781.52 1005.33,780.47 1004.63,779.43 1003.92,778.40 1003.19,777.37 1002.44,776.36 1001.68,775.35 1000.91,774.35 1000.12,773.36 999.32,772.38 998.50,771.41 997.67,770.45 996.83,769.50 995.97,768.56 995.10,767.64 994.21,766.72 993.32,765.81 992.41,764.91 991.48,764.03 990.55,763.15 989.60,762.29 988.64,761.44 987.67,760.60 986.68,759.78 985.69,758.96 984.68,758.16 983.66,757.37 982.63,756.60 981.59,755.83 980.53,755.08 979.47,754.34 978.40,753.62 977.31,752.91 976.22,752.21 975.12,751.53 974.00,750.86 972.88,750.21 971.75,749.57 970.61,748.95 969.46,748.33 968.30,747.74 967.13,747.16 965.95,746.59 964.77,746.04 963.58,745.50 962.38,744.98 961.17,744.48 959.96,743.99 958.74,743.51 957.51,743.06 956.28,742.61 955.04,742.19 953.79,741.78 952.54,741.38 951.29,741.01 950.02,740.64 948.76,740.30 947.48,739.97 946.21,739.66 944.93,739.36 943.64,739.08 942.35,738.82 941.06,738.58 939.76,738.35 938.46,738.14 937.16,737.94 935.86,737.76 934.55,737.60 933.24,737.46 931.93,737.33 930.62,737.22 929.30,737.13 927.99,737.06 926.67,737.00 925.35,736.96 924.04,736.94 922.72,736.93 921.40,736.94 920.08,736.97 918.77,737.02 917.45,737.08 916.14,737.17 914.82,737.26 913.51,737.38 912.20,737.51 910.89,737.66 909.59,737.83 908.29,738.02 906.99,738.22 905.69,738.44 904.40,738.68 903.11,738.93 901.82,739.20 900.54,739.49 899.27,739.79 897.99,740.11 896.73,740.45 895.46,740.81 894.21,741.18 892.96,741.57 891.71,741.97 890.47,742.40 889.24,742.83 888.01,743.29 886.79,743.76 885.58,744.25 884.38,744.75 883.18,745.27 881.99,745.80 880.81,746.35 879.64,746.92 878.48,747.50 877.32,748.10 876.17,748.71 875.04,749.34 873.91,749.98 872.79,750.64 871.69,751.31 870.59,752.00 869.50,752.70 868.42,753.41 867.36,754.14 866.31,754.89 865.26,755.65 864.23,756.42 863.21,757.21 862.20,758.00 861.21,758.82 860.22,759.64 859.25,760.48 858.30,761.33 857.35,762.20 856.42,763.07 855.50,763.96 854.60,764.86 853.71,765.78 852.83,766.70 851.97,767.64 851.12,768.58 850.28,769.54 849.46,770.51 848.66,771.49 847.87,772.48 847.10,773.48 846.34,774.49 845.60,775.51 844.87,776.54 844.15,777.58 843.46,778.63 842.78,779.68 842.11,780.75 841.46,781.82 840.83,782.90 840.21,783.98 839.61,785.08 839.02,786.18 838.46,787.28 837.90,788.39 837.37,789.51 836.85,790.63 836.34,791.76 835.85,792.89 835.38,794.03 834.93,795.17 834.49,796.31 834.06,797.46 833.66,798.61 833.26,799.76 832.89,800.92 832.53,802.08 832.19,803.24 831.86,804.41 831.55,805.57 831.26,806.74 830.98,807.90 830.72,809.07 830.47,810.24 830.24,811.41 830.03,812.58 829.83,813.74 829.64,814.91 829.47,816.08 829.32,817.24 829.18,818.41 829.06,819.57 828.95,820.73 828.86,821.89 828.78,823.05 828.71,824.20 828.66,825.35 828.63,826.50 828.61,827.64 828.60,828.78 828.61,829.92 828.63,831.05 828.67,832.18 828.71,833.30 828.78,834.42 828.85,835.54 828.94,836.65 829.04,837.75 829.16,838.85 829.29,839.95 829.43,841.04 829.60,842.13 829.78,843.22 829.99,844.30 830.22,845.38 830.47,846.46 830.75,847.54 831.05,848.61 831.38,849.69 831.74,850.76 832.14,851.84 832.56,852.91 833.02,853.98 833.52,855.04 834.05,856.11 834.62,857.17 835.24,858.23 835.89,859.29 836.59,860.34 837.34,861.40 838.13,862.44 838.97,863.48 839.86,864.52 840.81,865.55 841.80,866.57 842.85,867.59 843.96,868.59 845.13,869.59 846.35,870.57 847.64,871.55 848.99,872.51 850.40,873.46 851.88,874.39 853.43,875.30 855.04,876.20 856.73,877.08 858.49,877.94 860.32,878.77 862.23,879.58 864.24,880.37 866.33,881.14 868.53,881.88 870.83,882.58 873.24,883.26 875.77,883.91 878.42,884.52 881.20,885.09 884.11,885.62 887.16,886.11 890.36,886.54 893.71,886.93 889.48,887.06 885.53,887.27 881.86,887.55 878.46,887.90 875.31,888.30 872.40,888.76 869.72,889.25 867.27,889.79 865.02,890.36 862.97,890.96 861.11,891.59 859.42,892.23 857.90,892.90 856.52,893.58 855.29,894.27 854.18,894.96 853.19,895.67 852.31,896.38 851.51,897.10 850.80,897.82 850.16,898.55 849.57,899.28 849.03,900.01 848.52,900.75 848.04,901.50 847.59,902.25 847.17,903.00 846.77,903.76 846.39,904.53 846.04,905.30 845.72,906.07 845.42,906.84 845.15,907.62 844.90,908.40 844.68,909.18 844.48,909.96 844.30,910.74 844.15,911.52 844.02,912.30 843.91,913.08 843.83,913.85 843.77,914.63 843.73,915.41 843.71,916.18 843.71,916.95 843.73,917.71 843.77,918.48 843.84,919.24 843.92,919.99 844.02,920.75 844.14,921.49 844.28,922.24 844.44,922.97 844.61,923.71 844.80,924.43 845.01,925.16 845.24,925.87 845.48,926.58 845.74,927.29 846.02,927.98 846.30,928.67 846.61,929.36 846.93,930.03 847.26,930.70 847.61,931.37 847.97,932.02 848.34,932.67 848.72,933.31 849.12,933.95 849.53,934.57 849.95,935.19 850.38,935.80 850.83,936.40 851.28,937.00 851.74,937.59 852.22,938.17 852.70,938.74 853.19,939.30 853.69,939.86 854.19,940.41 854.71,940.95 855.23,941.49 855.75,942.01 856.29,942.54 856.83,943.05 857.37,943.56 857.92,944.06 858.48,944.55 859.04,945.04 859.60,945.53 860.17,946.00 860.74,946.48 861.32,946.94 861.89,947.41 862.47,947.86 863.06,948.32 863.64,948.77 864.23,949.21 864.81,949.65 865.40,950.09 865.99,950.53 866.58,950.96 867.18,951.39 867.77,951.82 868.36,952.24 868.95,952.67 869.55,953.09 870.14,953.51 870.73,953.94 871.32,954.36 871.91,954.78 872.50,955.21 873.09,955.63 873.68,956.06 874.26,956.49 874.85,956.92 875.43,957.35 876.02,957.79 876.60,958.23 877.18,958.67 877.76,959.12 878.34,959.57 878.91,960.03 879.49,960.49 880.06,960.96 880.64,961.44 881.21,961.92 881.78,962.41 882.36,962.90 882.93,963.39 883.51,963.90 884.09,964.40 884.67,964.91 885.25,965.42 885.84,965.93 886.43,966.45 887.02,966.97 887.62,967.49 888.22,968.01 888.82,968.53 889.44,969.05 890.05,969.57 890.67,970.09 891.30,970.60 891.93,971.12 892.57,971.63 893.21,972.14 893.86,972.65 894.52,973.15 895.18,973.65 895.85,974.15 896.53,974.63 897.21,975.11 897.90,975.59 898.60,976.06 899.31,976.52 900.02,976.97 900.73,977.41 901.46,977.85 902.19,978.27 902.93,978.68 903.68,979.08 904.43,979.47 905.19,979.85 905.95,980.22 906.72,980.57 907.50,980.91 908.28,981.23 909.07,981.54 909.87,981.83 910.67,982.10 911.47,982.36 912.28,982.61 913.09,982.83 913.91,983.04 914.73,983.22 915.56,983.39 916.39,983.54 917.22,983.67 918.05,983.77 918.89,983.86 919.72,983.92 920.56,983.96 921.40,983.98 922.24,983.97 923.08,983.94 923.91,983.89 924.75,983.81 925.58,983.72 926.42,983.60 927.24,983.46 928.07,983.29 928.89,983.11 929.71,982.91 930.53,982.69 931.34,982.45 932.14,982.19 932.94,981.91 933.74,981.61 934.53,981.29 935.31,980.96 936.08,980.61 936.85,980.24 937.61,979.86 938.37,979.46 939.12,979.05 939.86,978.62 940.59,978.17 941.31,977.72 942.03,977.25 942.73,976.76 943.43,976.26 944.12,975.76 944.80,975.23 945.47,974.70 946.13,974.16 946.79,973.61 947.43,973.04 948.06,972.47 948.69,971.89 949.30,971.29 949.91,970.70 950.50,970.09 951.09,969.48 951.67,968.86 952.24,968.24 952.80,967.61 953.35,966.99 953.90,966.36 954.44,965.73 954.97,965.10 955.49,964.48 956.01,963.85 956.53,963.23 957.04,962.62 957.55,962.01 958.05,961.41 958.55,960.81 959.05,960.22 959.54,959.64 960.04,959.07 960.54,958.51 961.04,957.96 961.54,957.42 962.04,956.89 962.55,956.38 963.06,955.88 963.58,955.39 964.10,954.92 964.63,954.47 965.17,954.03 965.71,953.60 966.26,953.18 966.82,952.77 967.39,952.37 967.96,951.99 968.54,951.61 969.12,951.23 969.72,950.87 970.31,950.51 970.92,950.15 971.52,949.80 972.14,949.45 972.75,949.10 973.38,948.76 974.00,948.41 974.63,948.07 975.26,947.72 975.90,947.37 976.53,947.02 977.17,946.67 977.81,946.31 978.45,945.95 979.09,945.59 979.73,945.22 980.36,944.84 981.00,944.45 981.63,944.06 982.25,943.66 982.88,943.26 983.50,942.84 984.11,942.41 984.72,941.98 985.32,941.53 985.91,941.08 986.49,940.61 987.06,940.13 987.62,939.64 988.17,939.14 988.71,938.62 989.24,938.10 989.75,937.56 990.25,937.01 990.73,936.44 991.20,935.87 991.65,935.28 992.08,934.68 992.50,934.07 992.91,933.45 993.29,932.82 993.66,932.18 994.01,931.53 994.34,930.86 994.65,930.19 994.94,929.51 995.22,928.82 995.47,928.12 995.70,927.41 995.91,926.69 996.10,925.96 996.27,925.23 996.41,924.49 996.54,923.74 996.64,922.98 996.71,922.22 996.76,921.45 996.79,920.68 996.79,919.90 996.77,919.12 996.73,918.33 996.65,917.54 996.55,916.75 996.43,915.95 996.28,915.15 996.10,914.35 995.89,913.55 995.65,912.75 995.39,911.94 995.10,911.14 994.78,910.33 994.43,909.53 994.05,908.73 993.65,907.94 993.21,907.14 992.74,906.35 992.24,905.56 991.71,904.78 991.15,904.00 990.56,903.23 989.94,902.47 989.29,901.71 988.60,900.96 987.89,900.22 987.14,899.49 986.36,898.77 985.54,898.06 984.70,897.36 983.82,896.67 982.91,896.00 981.96,895.34 980.98,894.69 979.97,894.06 978.93,893.44 977.85,892.84 976.74,892.26 975.60,891.69 974.42,891.14 973.21,890.62 971.97,890.11 970.69,889.62 969.38,889.16 968.03,888.71 966.66,888.29 965.24,887.90" fill="none" stroke="#0072bd" stroke-width="2.3" stroke-linejoin="round"/><path d="M918.75 727 L929.25 727 L924 737 Z" fill="#0072bd"/><path d="M923.7 721.9 L925.1 710.2 L921.3 713.3" fill="none" stroke="#0072bd" stroke-width="1.4"/><text x="921.40" y="682.70" font-size="18.8" font-weight="bold" text-anchor="middle" fill="#000">Directivity (dBi) @ 2.50 GHz</text><rect x="1092.5" y="646.0" width="70.8" height="16.5" fill="#fff" stroke="#3c3c3c" stroke-width="1" rx="1"/><line x1="1096.5" y1="655.0" x2="1130.0" y2="655.0" stroke="#0072bd" stroke-width="2.6"/><text x="1133.0" y="658.5" font-size="9.6" fill="#262626">az=0&#176;</text><rect x="668.5" y="1087.5" width="175.5" height="51" fill="#fff" stroke="#222" stroke-width="1.4"/><rect x="669.2" y="1088.2" width="164.5" height="12.5" fill="#636384"/><text x="756.5" y="1097.5" font-size="9.4" text-anchor="middle" fill="#f4f4f4">Peaks (Dataset 1)</text><rect x="834" y="1088.7" width="9" height="11.5" fill="#e8e8e8" stroke="#888" stroke-width=".6"/><text x="838.5" y="1098.5" font-size="11" text-anchor="middle" fill="#222" font-family="Liberation Serif">X</text><text x="672.5" y="1110.0" font-size="9.4" fill="#1a1a1a">1: 10.09 dB</text><rect x="664.5" y="347.5" width="2" height="2.5" fill="#111"/><rect x="664.5" y="876.5" width="2" height="2.5" fill="#111"/><rect x="407.5" y="612.5" width="2" height="2.5" fill="#111"/><rect x="919.5" y="612.5" width="2" height="2.5" fill="#111"/><defs><filter id="blur6" x="-30%" y="-30%" width="160%" height="160%"><feGaussianBlur stdDeviation="4"/></filter><filter id="blur2" x="-50%" y="-50%" width="200%" height="200%"><feGaussianBlur stdDeviation="2.2"/></filter><clipPath id="patchclip"><polygon points="304.90,336.20 402.50,298.60 500.20,361.70 404.30,398.90"/></clipPath><clipPath id="gndclip"><polygon points="221.50,339.50 425.00,260.60 584.50,362.60 379.60,441.70"/></clipPath><linearGradient id="stripe" gradientUnits="userSpaceOnUse" x1="354.6" y1="367.55" x2="399.0" y2="297.1"><stop offset="0" stop-color="#0060ff"/><stop offset=".06" stop-color="#00b0ff"/><stop offset=".16" stop-color="#00f0ff"/><stop offset=".3" stop-color="#60ffa0"/><stop offset=".46" stop-color="#90ff70"/><stop offset=".6" stop-color="#70ff90"/><stop offset=".7" stop-color="#10f8f0"/><stop offset=".79" stop-color="#00a0ff"/><stop offset=".89" stop-color="#0028f0"/><stop offset="1" stop-color="#0000a8"/></linearGradient><radialGradient id="cornb"><stop offset="0" stop-color="#0030f0" stop-opacity=".95"/><stop offset=".5" stop-color="#0070ff" stop-opacity=".5"/><stop offset="1" stop-color="#00a0ff" stop-opacity="0"/></radialGradient><radialGradient id="yel"><stop offset="0" stop-color="#ffff00"/><stop offset=".45" stop-color="#e0ff20" stop-opacity=".9"/><stop offset="1" stop-color="#80ff80" stop-opacity="0"/></radialGradient></defs><polyline points="221.50,337.90 425.00,259.00 584.50,361.00" fill="none" stroke="#6a6a6a" stroke-width="3.6" stroke-linejoin="miter"/><polyline points="221.50,337.90 425.00,259.00 584.50,361.00" fill="none" stroke="#f6f6f6" stroke-width="1.5" stroke-linejoin="miter"/><polygon points="221.50,339.50 425.00,260.60 584.50,362.60 379.60,441.70" fill="#00008c"/><polyline points="221.50,339.50 379.60,441.70 584.50,362.60" fill="none" stroke="#000030" stroke-width="1"/><g clip-path="url(#gndclip)"><polygon points="304.90,336.20 402.50,298.60 500.20,361.70 404.30,398.90" fill="none" stroke="#0000f0" stroke-width="5" filter="url(#blur2)" opacity=".55"/></g><polygon points="304.90,336.20 402.50,298.60 500.20,361.70 404.30,398.90" fill="url(#stripe)"/><g clip-path="url(#patchclip)"><ellipse cx="304.9" cy="336.2" rx="22" ry="16" fill="url(#cornb)" transform="rotate(-21 304.9 336.2)"/><ellipse cx="404.3" cy="398.9" rx="22" ry="16" fill="url(#cornb)" transform="rotate(-21 404.3 398.9)"/><ellipse cx="402.5" cy="298.6" rx="22" ry="16" fill="url(#cornb)" transform="rotate(-21 402.5 298.6)"/><ellipse cx="500.2" cy="361.7" rx="22" ry="16" fill="url(#cornb)" transform="rotate(-21 500.2 361.7)"/><ellipse cx="354" cy="318.5" rx="26" ry="5" fill="url(#yel)" transform="rotate(-21 354 318.5)"/><ellipse cx="454" cy="380" rx="26" ry="5" fill="url(#yel)" transform="rotate(-21 454 380)"/></g><polygon points="304.90,336.20 402.50,298.60 500.20,361.70 404.30,398.90" fill="none" stroke="#101010" stroke-width="1"/><rect x="421.3" y="340.3" width="4" height="2.4" fill="#e04000" stroke="#400000" stroke-width=".5" transform="rotate(28 423.3 341.5)"/><line x1="221.50" y1="339.50" x2="216.40" y2="341.50" stroke="#333" stroke-width="1"/><text x="215.50" y="352.45" font-size="10" text-anchor="end" fill="#262626">0.06</text><line x1="247.85" y1="356.53" x2="242.75" y2="358.53" stroke="#333" stroke-width="1"/><text x="241.85" y="369.48" font-size="10" text-anchor="end" fill="#262626">0.04</text><line x1="274.20" y1="373.57" x2="269.10" y2="375.57" stroke="#333" stroke-width="1"/><text x="268.20" y="386.52" font-size="10" text-anchor="end" fill="#262626">0.02</text><line x1="300.55" y1="390.60" x2="295.45" y2="392.60" stroke="#333" stroke-width="1"/><text x="294.55" y="403.55" font-size="10" text-anchor="end" fill="#262626">0</text><line x1="326.90" y1="407.63" x2="321.80" y2="409.63" stroke="#333" stroke-width="1"/><text x="320.90" y="420.58" font-size="10" text-anchor="end" fill="#262626">-0.02</text><line x1="353.25" y1="424.67" x2="348.15" y2="426.67" stroke="#333" stroke-width="1"/><text x="347.25" y="437.62" font-size="10" text-anchor="end" fill="#262626">-0.04</text><line x1="379.60" y1="441.70" x2="374.50" y2="443.70" stroke="#333" stroke-width="1"/><text x="373.60" y="454.65" font-size="10" text-anchor="end" fill="#262626">-0.06</text><line x1="379.60" y1="441.70" x2="384.20" y2="444.70" stroke="#333" stroke-width="1"/><text x="385.60" y="455.15" font-size="10" text-anchor="start" fill="#262626">-0.06</text><line x1="413.75" y1="428.52" x2="418.35" y2="431.52" stroke="#333" stroke-width="1"/><text x="419.75" y="441.97" font-size="10" text-anchor="start" fill="#262626">-0.04</text><line x1="447.90" y1="415.33" x2="452.50" y2="418.33" stroke="#333" stroke-width="1"/><text x="453.90" y="428.78" font-size="10" text-anchor="start" fill="#262626">-0.02</text><line x1="482.05" y1="402.15" x2="486.65" y2="405.15" stroke="#333" stroke-width="1"/><text x="488.05" y="415.60" font-size="10" text-anchor="start" fill="#262626">0</text><line x1="516.20" y1="388.97" x2="520.80" y2="391.97" stroke="#333" stroke-width="1"/><text x="522.20" y="402.42" font-size="10" text-anchor="start" fill="#262626">0.02</text><line x1="550.35" y1="375.78" x2="554.95" y2="378.78" stroke="#333" stroke-width="1"/><text x="556.35" y="389.23" font-size="10" text-anchor="start" fill="#262626">0.04</text><text x="291.7" y="445.3" font-size="10" text-anchor="middle" fill="#262626">y (m)</text><text x="480.8" y="450.3" font-size="10" text-anchor="middle" fill="#262626">x (m)</text><text x="402.9" y="253.8" font-size="10" text-anchor="middle" fill="#1a1a1a">Current distribution</text><rect x="590.5" y="145.5" width="23" height="409.5" fill="url(#jetv)" stroke="#262626" stroke-width="1"/><line x1="590.5" y1="503.5" x2="593" y2="503.5" stroke="#262626" stroke-width="1"/><line x1="611" y1="503.5" x2="613.5" y2="503.5" stroke="#262626" stroke-width="1"/><text x="617.5" y="509.1" font-size="11.5" fill="#262626">1</text><line x1="590.5" y1="452.0" x2="593" y2="452.0" stroke="#262626" stroke-width="1"/><line x1="611" y1="452.0" x2="613.5" y2="452.0" stroke="#262626" stroke-width="1"/><text x="617.5" y="457.6" font-size="11.5" fill="#262626">2</text><line x1="590.5" y1="400.5" x2="593" y2="400.5" stroke="#262626" stroke-width="1"/><line x1="611" y1="400.5" x2="613.5" y2="400.5" stroke="#262626" stroke-width="1"/><text x="617.5" y="406.1" font-size="11.5" fill="#262626">3</text><line x1="590.5" y1="349.0" x2="593" y2="349.0" stroke="#262626" stroke-width="1"/><line x1="611" y1="349.0" x2="613.5" y2="349.0" stroke="#262626" stroke-width="1"/><text x="617.5" y="354.6" font-size="11.5" fill="#262626">4</text><line x1="590.5" y1="297.5" x2="593" y2="297.5" stroke="#262626" stroke-width="1"/><line x1="611" y1="297.5" x2="613.5" y2="297.5" stroke="#262626" stroke-width="1"/><text x="617.5" y="303.1" font-size="11.5" fill="#262626">5</text><line x1="590.5" y1="246.0" x2="593" y2="246.0" stroke="#262626" stroke-width="1"/><line x1="611" y1="246.0" x2="613.5" y2="246.0" stroke="#262626" stroke-width="1"/><text x="617.5" y="251.6" font-size="11.5" fill="#262626">6</text><line x1="590.5" y1="194.5" x2="593" y2="194.5" stroke="#262626" stroke-width="1"/><line x1="611" y1="194.5" x2="613.5" y2="194.5" stroke="#262626" stroke-width="1"/><text x="617.5" y="200.1" font-size="11.5" fill="#262626">7</text><text x="642.5" y="350" font-size="12.5" text-anchor="middle" fill="#262626" transform="rotate(-90 642.5 350)">A/m</text><defs><linearGradient id="mlg" gradientUnits="userSpaceOnUse" x1="0" y1="754" x2="0" y2="880"><stop offset="0" stop-color="#780000"/><stop offset=".167" stop-color="#b40000"/><stop offset=".365" stop-color="#ff0000"/><stop offset=".46" stop-color="#ff4000"/><stop offset=".56" stop-color="#ff8000"/><stop offset=".706" stop-color="#ffc000"/><stop offset=".825" stop-color="#ffff00"/><stop offset=".937" stop-color="#c0ff40"/><stop offset="1" stop-color="#90ff70"/></linearGradient><linearGradient id="llg" gradientUnits="userSpaceOnUse" x1="0" y1="884" x2="0" y2="930"><stop offset="0" stop-color="#30ffd0"/><stop offset=".6" stop-color="#30ffc8"/><stop offset="1" stop-color="#b0ff50"/></linearGradient><radialGradient id="hole" cx=".5" cy=".5" r=".5" fx=".75" fy=".6"><stop offset="0" stop-color="#00e8ff"/><stop offset=".4" stop-color="#50ffb0"/><stop offset=".75" stop-color="#d0ff30" stop-opacity=".9"/><stop offset="1" stop-color="#ffff00" stop-opacity="0"/></radialGradient><clipPath id="holeclip"><polygon points="300,820 350,830 367.5,875 368,900 300,900"/></clipPath><radialGradient id="bspot"><stop offset="0" stop-color="#0090ff"/><stop offset=".5" stop-color="#00d0ff" stop-opacity=".8"/><stop offset="1" stop-color="#30ffd0" stop-opacity="0"/></radialGradient><clipPath id="mlclip"><path d="M470.70 838.00 C470.58 844.42 469.95 847.50 469.00 852.00 C468.05 856.50 466.50 861.17 465.00 865.00 C463.50 868.83 465.00 873.00 460.00 875.00 C455.00 877.00 445.33 876.08 435.00 877.00 C424.67 877.92 409.33 880.33 398.00 880.50 C386.67 880.67 375.00 879.00 367.00 878.00 C359.00 877.00 355.33 875.67 350.00 874.50 C344.67 873.33 338.25 872.58 335.00 871.00 C331.75 869.42 331.83 868.17 330.50 865.00 C329.17 861.83 327.72 856.50 327.00 852.00 C326.28 847.50 326.15 844.42 326.20 838.00 C326.25 831.58 326.08 820.76 327.30 813.50 C328.52 806.24 330.61 800.38 333.52 794.44 C336.43 788.49 340.33 782.74 344.77 777.82 C349.22 772.91 354.55 768.45 360.19 764.94 C365.82 761.43 372.19 758.61 378.57 756.79 C384.96 754.97 391.86 754.00 398.50 754.00 C405.14 754.00 412.04 754.97 418.43 756.79 C424.81 758.61 431.18 761.43 436.81 764.94 C442.45 768.45 447.78 772.91 452.23 777.82 C456.67 782.74 460.57 788.49 463.48 794.44 C466.39 800.38 468.50 806.24 469.70 813.50 C470.90 820.76 470.82 831.58 470.70 838.00 Z"/></clipPath><clipPath id="llclip"><path d="M345.00 884.00 C336.88 886.83 348.75 892.12 351.25 895.00 C353.75 897.88 356.88 899.38 360.00 901.25 C363.12 903.12 367.50 904.38 370.00 906.25 C372.50 908.12 373.33 910.21 375.00 912.50 C376.67 914.79 377.92 917.71 380.00 920.00 C382.08 922.29 384.38 924.67 387.50 926.25 C390.62 927.83 395.00 929.50 398.75 929.50 C402.50 929.50 406.88 928.04 410.00 926.25 C413.12 924.46 415.42 921.46 417.50 918.75 C419.58 916.04 420.42 912.29 422.50 910.00 C424.58 907.71 427.08 906.88 430.00 905.00 C432.92 903.12 437.08 900.83 440.00 898.75 C442.92 896.67 445.42 894.96 447.50 892.50 C449.58 890.04 460.42 886.42 452.50 884.00 C444.58 881.58 417.92 878.00 400.00 878.00 C382.08 878.00 353.12 881.17 345.00 884.00 Z"/></clipPath></defs><path d="M345.00 884.00 C336.88 886.83 348.75 892.12 351.25 895.00 C353.75 897.88 356.88 899.38 360.00 901.25 C363.12 903.12 367.50 904.38 370.00 906.25 C372.50 908.12 373.33 910.21 375.00 912.50 C376.67 914.79 377.92 917.71 380.00 920.00 C382.08 922.29 384.38 924.67 387.50 926.25 C390.62 927.83 395.00 929.50 398.75 929.50 C402.50 929.50 406.88 928.04 410.00 926.25 C413.12 924.46 415.42 921.46 417.50 918.75 C419.58 916.04 420.42 912.29 422.50 910.00 C424.58 907.71 427.08 906.88 430.00 905.00 C432.92 903.12 437.08 900.83 440.00 898.75 C442.92 896.67 445.42 894.96 447.50 892.50 C449.58 890.04 460.42 886.42 452.50 884.00 C444.58 881.58 417.92 878.00 400.00 878.00 C382.08 878.00 353.12 881.17 345.00 884.00 Z" fill="url(#llg)"/><g clip-path="url(#llclip)"><ellipse cx="414" cy="893" rx="22" ry="12" fill="url(#bspot)"/><ellipse cx="362" cy="893" rx="18" ry="10" fill="#80ff80" opacity=".3"/></g><polygon points="261.25,864.50 428.50,844.50 547.50,872.50 380.00,892.50" fill="#e3b34a" stroke="#3a3020" stroke-width=".9"/><polygon points="327.00,862.00 392.00,879.00 480.00,870.00 415.00,853.00" fill="none" stroke="#2a2a2a" stroke-width="1.2"/><ellipse cx="398.75" cy="868.5" rx="125" ry="18.5" fill="none" stroke="#0000ff" stroke-width="2.2"/><path d="M470.70 838.00 C470.58 844.42 469.95 847.50 469.00 852.00 C468.05 856.50 466.50 861.17 465.00 865.00 C463.50 868.83 465.00 873.00 460.00 875.00 C455.00 877.00 445.33 876.08 435.00 877.00 C424.67 877.92 409.33 880.33 398.00 880.50 C386.67 880.67 375.00 879.00 367.00 878.00 C359.00 877.00 355.33 875.67 350.00 874.50 C344.67 873.33 338.25 872.58 335.00 871.00 C331.75 869.42 331.83 868.17 330.50 865.00 C329.17 861.83 327.72 856.50 327.00 852.00 C326.28 847.50 326.15 844.42 326.20 838.00 C326.25 831.58 326.08 820.76 327.30 813.50 C328.52 806.24 330.61 800.38 333.52 794.44 C336.43 788.49 340.33 782.74 344.77 777.82 C349.22 772.91 354.55 768.45 360.19 764.94 C365.82 761.43 372.19 758.61 378.57 756.79 C384.96 754.97 391.86 754.00 398.50 754.00 C405.14 754.00 412.04 754.97 418.43 756.79 C424.81 758.61 431.18 761.43 436.81 764.94 C442.45 768.45 447.78 772.91 452.23 777.82 C456.67 782.74 460.57 788.49 463.48 794.44 C466.39 800.38 468.50 806.24 469.70 813.50 C470.90 820.76 470.82 831.58 470.70 838.00 Z" fill="url(#mlg)"/><g clip-path="url(#mlclip)"><ellipse cx="351" cy="873" rx="22" ry="27" fill="url(#hole)" clip-path="url(#holeclip)"/></g><path d="M273.75 868.5 A125 18.5 0 0 0 523.75 868.5" fill="none" stroke="#0000ff" stroke-width="2.2"/><line x1="287.5" y1="880" x2="366" y2="871" stroke="#ff0000" stroke-width="1.6"/><line x1="427.5" y1="873.5" x2="479" y2="887" stroke="#00ee00" stroke-width="1.6"/><line x1="399" y1="733" x2="399" y2="755" stroke="#0000ff" stroke-width="1.8"/><ellipse cx="397" cy="867" rx="72.5" ry="124.5" fill="none" stroke="#ff0000" stroke-width="2.4" transform="rotate(-6.6 397 867)"/><ellipse cx="399" cy="866.5" rx="99" ry="126" fill="none" stroke="#00ee00" stroke-width="2.4" transform="rotate(14 399 866.5)"/><text x="401.4" y="731" font-size="10.5" text-anchor="middle" fill="#262626">z</text><text x="278.8" y="887.5" font-size="10.5" text-anchor="middle" fill="#262626">x</text><text x="485" y="893.5" font-size="10.5" text-anchor="middle" fill="#262626">y</text><text x="290" y="868" font-size="10.5" text-anchor="middle" fill="#262626">el</text><text x="301.5" y="889" font-size="10.5" text-anchor="middle" fill="#262626">az</text><path d="M291.5 876 L291.5 870 M289.5 872 L291.5 869.5 L293.5 872 M291.5 876 L296 879" stroke="#111" stroke-width="1.2" fill="none"/><rect x="570.5" y="687.5" width="17" height="351" fill="url(#jetv)" stroke="#262626" stroke-width="1"/><line x1="570.5" y1="688.8" x2="573" y2="688.8" stroke="#262626" stroke-width="1"/><line x1="585" y1="688.8" x2="587.5" y2="688.8" stroke="#262626" stroke-width="1"/><text x="592" y="692.6" font-size="10.5" fill="#262626">10</text><line x1="570.5" y1="732.0" x2="573" y2="732.0" stroke="#262626" stroke-width="1"/><line x1="585" y1="732.0" x2="587.5" y2="732.0" stroke="#262626" stroke-width="1"/><text x="592" y="735.8" font-size="10.5" fill="#262626">5</text><line x1="570.5" y1="775.2" x2="573" y2="775.2" stroke="#262626" stroke-width="1"/><line x1="585" y1="775.2" x2="587.5" y2="775.2" stroke="#262626" stroke-width="1"/><text x="592" y="779.0" font-size="10.5" fill="#262626">0</text><line x1="570.5" y1="818.4" x2="573" y2="818.4" stroke="#262626" stroke-width="1"/><line x1="585" y1="818.4" x2="587.5" y2="818.4" stroke="#262626" stroke-width="1"/><text x="592" y="822.2" font-size="10.5" fill="#262626">-5</text><line x1="570.5" y1="861.6" x2="573" y2="861.6" stroke="#262626" stroke-width="1"/><line x1="585" y1="861.6" x2="587.5" y2="861.6" stroke="#262626" stroke-width="1"/><text x="592" y="865.4" font-size="10.5" fill="#262626">-10</text><line x1="570.5" y1="904.8" x2="573" y2="904.8" stroke="#262626" stroke-width="1"/><line x1="585" y1="904.8" x2="587.5" y2="904.8" stroke="#262626" stroke-width="1"/><text x="592" y="908.5" font-size="10.5" fill="#262626">-15</text><line x1="570.5" y1="947.9" x2="573" y2="947.9" stroke="#262626" stroke-width="1"/><line x1="585" y1="947.9" x2="587.5" y2="947.9" stroke="#262626" stroke-width="1"/><text x="592" y="951.7" font-size="10.5" fill="#262626">-20</text><line x1="570.5" y1="991.1" x2="573" y2="991.1" stroke="#262626" stroke-width="1"/><line x1="585" y1="991.1" x2="587.5" y2="991.1" stroke="#262626" stroke-width="1"/><text x="592" y="994.9" font-size="10.5" fill="#262626">-25</text><line x1="570.5" y1="1034.3" x2="573" y2="1034.3" stroke="#262626" stroke-width="1"/><line x1="585" y1="1034.3" x2="587.5" y2="1034.3" stroke="#262626" stroke-width="1"/><text x="592" y="1038.1" font-size="10.5" fill="#262626">-30</text><rect x="159.5" y="1109.5" width="101" height="19" fill="#ffffff" stroke="#acacac" stroke-width="1"/><rect x="247.5" y="1110" width="12.5" height="18" fill="#dcdcdc"/><path d="M250.5 1117 L253.7 1120.5 L257 1117" fill="none" stroke="#444" stroke-width="1"/><text x="162" y="1122.3" font-size="9.5" fill="#1a1a1a">Overlay Antenna</text></svg></body></html>
